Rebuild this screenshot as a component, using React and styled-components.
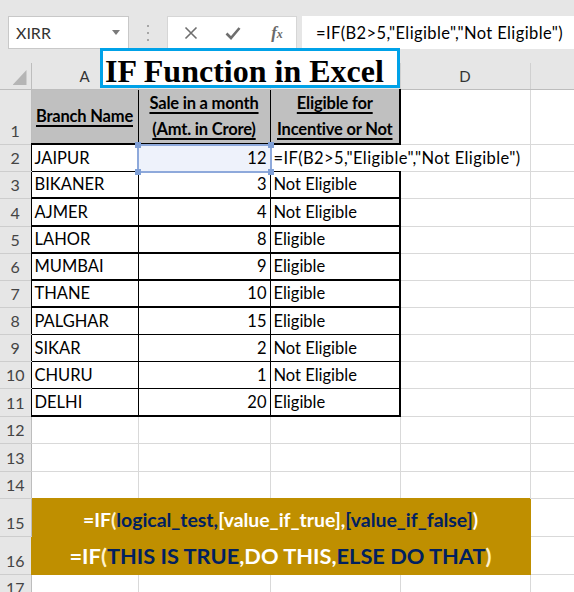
import React from 'react';
import styled, { createGlobalStyle, css } from 'styled-components';

const GlobalStyle = createGlobalStyle`
  html, body { margin: 0; padding: 0; background: #ffffff; }
  body {
    width: 574px; height: 592px; overflow: hidden;
    font-family: Lato, "Liberation Sans", sans-serif;
    color: #000;
  }
`;

const Page = styled.div`
  position: relative;
  width: 574px;
`;

/* ---------- formula bar ---------- */
const Toolbar = styled.div`
  display: flex;
  align-items: flex-start;
  height: 63px;
  box-sizing: border-box;
  padding: 16px 0 0 8px;
  background: #e6e6e6;
`;

const NameBox = styled.div`
  display: flex;
  align-items: center;
  justify-content: space-between;
  box-sizing: border-box;
  width: 121px;
  height: 33px;
  padding: 0 8px 0 7px;
  background: #fff;
  border: 1px solid #c8c8c8;
  font-size: 16px;
  color: #333;
`;

const DropArrow = styled.span`
  width: 0; height: 0;
  border-left: 4px solid transparent;
  border-right: 4px solid transparent;
  border-top: 5px solid #7a7a7a;
`;

const Grip = styled.div`
  display: flex;
  flex-direction: column;
  align-items: center;
  justify-content: center;
  gap: 5px;
  width: 38px;
  height: 33px;
`;

const GripDot = styled.span`
  width: 2px; height: 2px; background: #a6a6a6;
`;

const FxButtons = styled.div`
  display: grid;
  grid-template-columns: repeat(3, 42px);
  align-items: center;
  box-sizing: border-box;
  width: 130px;
  height: 33px;
  padding-left: 2px;
  background: #fff;
  border: 1px solid #d6d6d6;
`;

const FxSlot = styled.div`
  display: flex;
  align-items: center;
  justify-content: center;
  height: 31px;
  color: #6a6a6a;
`;

const FxLabel = styled.span`
  font-family: "Liberation Serif", serif;
  font-style: italic;
  font-weight: 700;
  font-size: 17px;
  color: #6a6a6a;
  margin-left: 4px;
  & > small { font-size: 12px; }
`;

const FormulaInput = styled.div`
  flex: 1;
  display: flex;
  align-items: center;
  box-sizing: border-box;
  height: 33px;
  margin-left: 5px;
  padding-left: 14px;
  background: #fff;
  font-size: 16.5px;
  letter-spacing: 0.4px;
  white-space: nowrap;
  overflow: hidden;
`;

/* ---------- title text box ---------- */
const TitleBox = styled.div`
  position: absolute;
  left: 100px;
  top: 48px;
  width: 300px;
  height: 40px;
  box-sizing: border-box;
  border: 3px solid #00a2e8;
  background: #fff;
  display: flex;
  align-items: flex-end;
  padding-left: 2px;
  z-index: 5;
  overflow: hidden;
`;

const TitleText = styled.span`
  font-family: "Liberation Serif", "Times New Roman", serif;
  font-weight: 700;
  font-size: 32px;
  line-height: 32px;
  margin-bottom: -2px;
  white-space: nowrap;
`;

/* ---------- sheet grid ---------- */
const Sheet = styled.table`
  border-collapse: collapse;
  table-layout: fixed;
  width: 574px;
`;

const Row = styled.tr`
  height: ${p => p.$h}px;
`;

const ColHead = styled.th`
  background: #e6e6e6;
  border-top: none;
  border-left: 1px solid #d0d0d0;
  border-right: 1px solid #d0d0d0;
  border-bottom: 1px solid #bdbdbd;
  font-weight: 400;
  font-size: 15px;
  color: #333;
  text-align: center;
  vertical-align: middle;
  padding: 0;
`;

const Corner = styled.th`
  background: #e6e6e6;
  border: none;
  border-right: 1px solid #bdbdbd;
  border-bottom: 1px solid #bdbdbd;
  padding: 0;
`;

const CornerInner = styled.div`
  display: flex;
  justify-content: flex-end;
  align-items: flex-end;
  height: 26px;
  box-sizing: border-box;
  padding: 0 4px 4px 0;
`;

const CornerTriangle = styled.span`
  width: 14px;
  height: 15px;
  background: #b5b5b5;
  clip-path: polygon(100% 0, 100% 100%, 0 100%);
`;

const RowHead = styled.th`
  background: #e6e6e6;
  color: #444;
  font-weight: 400;
  font-size: 16px;
  line-height: 20px;
  text-align: center;
  vertical-align: bottom;
  padding: 0 0 3px;
  border: 1px solid #cdcdcd;
  border-left: none;
  border-right: 1px solid ${p => (p.$dark ? '#000' : '#bdbdbd')};
`;

const borderValue = v =>
  v === 'thick' ? '2px solid #000' : v === 'hidden' ? 'hidden' : '1px solid #000';

const Cell = styled.td`
  border: 1px solid #d9d9d9;
  padding: 0 3px 3px 3px;
  vertical-align: bottom;
  font-size: 16.5px;
  line-height: 20px;
  white-space: nowrap;
  overflow: hidden;
  text-align: ${p => p.$align || 'left'};
  background: ${p => p.$bg || 'transparent'};
  ${p => p.$bottom && css`border-bottom: ${borderValue(p.$bottom)};`}
  ${p => p.$right && css`border-right: ${borderValue(p.$right)};`}
  ${p => p.$overflow && css`overflow: visible; position: relative; z-index: 2; letter-spacing: 0.4px;`}
  ${p => p.$selected && css`position: relative; background: #eef2fb; overflow: visible;`}
`;

const HeaderCell = styled(Cell)`
  background: #c0c0c0;
  font-weight: 700;
  font-size: 16.5px;
  letter-spacing: -0.2px;
  text-align: center;
  vertical-align: middle;
  line-height: 26px;
  padding: 0 0 1px;
`;

const Under = styled.span`
  text-decoration: underline;
  text-decoration-thickness: 2px;
  text-underline-offset: 3px;
`;

const Selection = styled.div`
  position: absolute;
  left: -2px;
  right: -2px;
  top: -1px;
  bottom: -2px;
  border: 2px solid #8ea9db;
  pointer-events: none;
`;

const Handle = styled.span`
  position: absolute;
  width: 6px;
  height: 6px;
  background: #7f9fd6;
  ${p => (p.$v === 'top' ? 'top: -4px;' : 'bottom: -4px;')}
  ${p => (p.$h === 'left' ? 'left: -4px;' : 'right: -4px;')}
`;

const Banner = styled.td`
  background: #bf8f00;
  border: 1px solid #bf8f00;
  border-top: hidden;
  padding: 0;
  text-align: center;
  vertical-align: top;
  font-weight: 700;
  white-space: nowrap;
  color: #fff;
`;

const BannerLine = styled.div`
  height: 38px;
  display: flex;
  align-items: center;
  justify-content: center;
  font-size: ${p => p.$size}px;
  letter-spacing: ${p => p.$ls || 0}px;
  padding-top: ${p => p.$pt || 0}px;
  box-sizing: border-box;
`;

const Tone = styled.span`
  color: ${p => (p.$c === 'navy' ? '#002060' : p.$c === 'cream' ? '#fff2cc' : '#ffffff')};
`;

const rows = [
  { n: 2, h: 27, a: 'JAIPUR', b: 12, c: '=IF(B2>5,"Eligible","Not Eligible")', bottom: 'thin' },
  { n: 3, h: 27, a: 'BIKANER', b: 3, c: 'Not Eligible', bottom: 'thick' },
  { n: 4, h: 28, a: 'AJMER', b: 4, c: 'Not Eligible', bottom: 'thick' },
  { n: 5, h: 27, a: 'LAHOR', b: 8, c: 'Eligible', bottom: 'thick' },
  { n: 6, h: 27, a: 'MUMBAI', b: 9, c: 'Eligible', bottom: 'thick' },
  { n: 7, h: 27, a: 'THANE', b: 10, c: 'Eligible', bottom: 'thick' },
  { n: 8, h: 27, a: 'PALGHAR', b: 15, c: 'Eligible', bottom: 'thin' },
  { n: 9, h: 27, a: 'SIKAR', b: 2, c: 'Not Eligible', bottom: 'thin' },
  { n: 10, h: 27, a: 'CHURU', b: 1, c: 'Not Eligible', bottom: 'thin' },
  { n: 11, h: 28, a: 'DELHI', b: 20, c: 'Eligible', bottom: 'thick' },
];

const emptyRows = [
  { n: 12, h: 27 },
  { n: 13, h: 28 },
  { n: 14, h: 27 },
];

const XIcon = () => (
  <svg width="14" height="14" viewBox="0 0 14 14">
    <path d="M1.5 1.5 L12.5 12.5 M12.5 1.5 L1.5 12.5" stroke="#6e6e6e" strokeWidth="1.6" fill="none" />
  </svg>
);

const CheckIcon = () => (
  <svg width="16" height="14" viewBox="0 0 16 14">
    <path d="M1.5 7.5 L6 12 L14.5 2" stroke="#6e6e6e" strokeWidth="2.6" fill="none" strokeLinejoin="miter" />
  </svg>
);

export default function App() {
  return (
    <Page>
      <GlobalStyle />
      <Toolbar>
        <NameBox>
          <span>XIRR</span>
          <DropArrow />
        </NameBox>
        <Grip>
          <GripDot />
          <GripDot />
          <GripDot />
        </Grip>
        <FxButtons>
          <FxSlot><XIcon /></FxSlot>
          <FxSlot><CheckIcon /></FxSlot>
          <FxSlot><FxLabel>f<small>x</small></FxLabel></FxSlot>
        </FxButtons>
        <FormulaInput>{'=IF(B2>5,"Eligible","Not Eligible")'}</FormulaInput>
      </Toolbar>

      <TitleBox>
        <TitleText>IF Function in Excel</TitleText>
      </TitleBox>

      <Sheet>
        <colgroup>
          <col style={{ width: 31 }} />
          <col style={{ width: 107 }} />
          <col style={{ width: 132 }} />
          <col style={{ width: 130 }} />
          <col style={{ width: 130 }} />
          <col style={{ width: 44 }} />
        </colgroup>
        <thead>
          <Row $h={26}>
            <Corner>
              <CornerInner><CornerTriangle /></CornerInner>
            </Corner>
            <ColHead>A</ColHead>
            <ColHead />
            <ColHead />
            <ColHead>D</ColHead>
            <ColHead />
          </Row>
        </thead>
        <tbody>
          <Row $h={54}>
            <RowHead>1</RowHead>
            <HeaderCell $right="thin" $bottom="thick">
              <Under>Branch Name</Under>
            </HeaderCell>
            <HeaderCell $right="thin" $bottom="thick">
              <Under>Sale in a month</Under>
              <br />
              <Under>(Amt. in Crore)</Under>
            </HeaderCell>
            <HeaderCell $right="thick" $bottom="thick">
              <Under>Eligible for</Under>
              <br />
              <Under>Incentive or Not</Under>
            </HeaderCell>
            <Cell />
            <Cell />
          </Row>

          {rows.map((r, i) => (
            <Row key={r.n} $h={r.h}>
              <RowHead $dark>{r.n}</RowHead>
              <Cell $right="thin" $bottom={r.bottom}>{r.a}</Cell>
              <Cell $right="thin" $bottom={r.bottom} $align="right" $selected={i === 0}>
                {r.b}
                {i === 0 && (
                  <Selection>
                    <Handle $v="top" $h="left" />
                    <Handle $v="top" $h="right" />
                    <Handle $v="bottom" $h="left" />
                    <Handle $v="bottom" $h="right" />
                  </Selection>
                )}
              </Cell>
              <Cell $right={i === 0 ? 'hidden' : 'thick'} $bottom={r.bottom} $overflow={i === 0}>
                {r.c}
              </Cell>
              <Cell />
              <Cell />
            </Row>
          ))}

          {emptyRows.map(r => (
            <Row key={r.n} $h={r.h}>
              <RowHead>{r.n}</RowHead>
              <Cell />
              <Cell />
              <Cell />
              <Cell />
              <Cell />
            </Row>
          ))}

          <Row $h={38}>
            <RowHead>15</RowHead>
            <Banner colSpan={4} rowSpan={2}>
              <BannerLine $size={19.4} $pt={4}>
                <Tone>=IF</Tone>
                <Tone $c="cream">(</Tone>
                <Tone $c="navy">logical_test,</Tone>
                <Tone>[value_if_true],</Tone>
                <Tone $c="navy">[value_if_false]</Tone>
                <Tone>)</Tone>
              </BannerLine>
              <BannerLine $size={21.8}>
                <Tone>=IF</Tone>
                <Tone $c="cream">(</Tone>
                <Tone $c="navy">THIS IS TRUE</Tone>
                <Tone>,DO THIS,</Tone>
                <Tone $c="navy">ELSE DO THAT</Tone>
                <Tone $c="cream">)</Tone>
              </BannerLine>
            </Banner>
            <Cell />
          </Row>
          <Row $h={38}>
            <RowHead>16</RowHead>
            <Cell />
          </Row>
          <Row $h={27}>
            <RowHead>17</RowHead>
            <Cell />
            <Cell />
            <Cell />
            <Cell />
            <Cell />
          </Row>
        </tbody>
      </Sheet>
    </Page>
  );
}
